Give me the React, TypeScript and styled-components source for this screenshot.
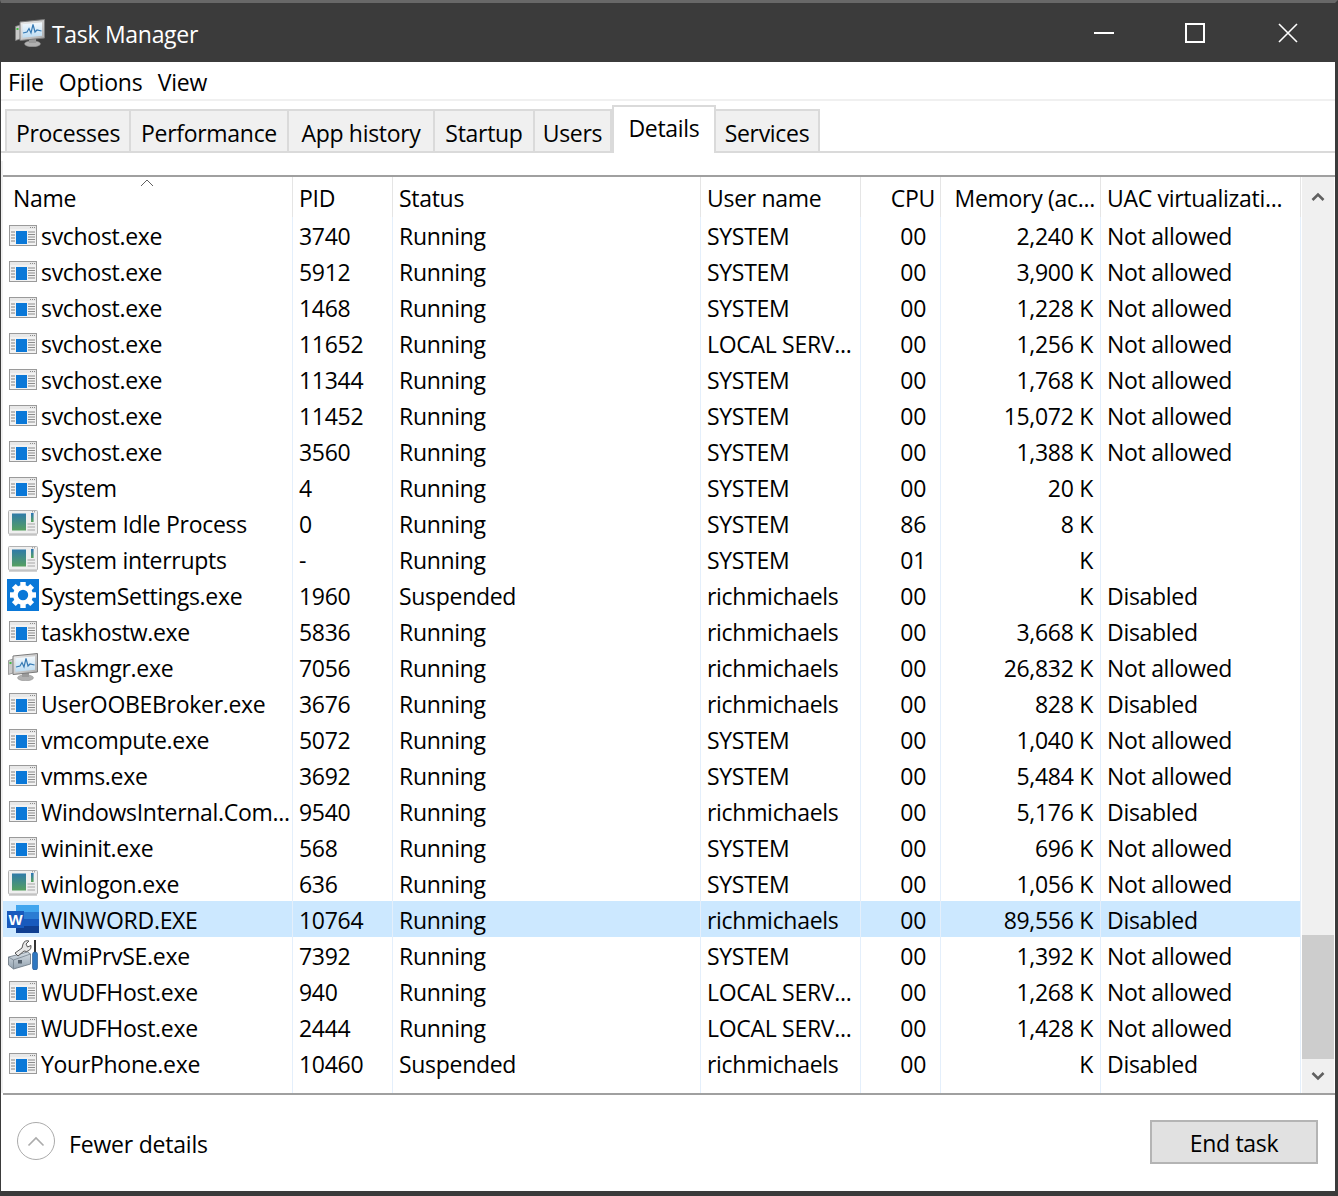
import React from 'react';
import styled, { createGlobalStyle } from 'styled-components';

const Global = createGlobalStyle`
  html, body { margin: 0; padding: 0; background: #3b3b3b; }
  * { box-sizing: border-box; }
`;

const Win = styled.div`
  width: 1338px;
  height: 1196px;
  display: flex;
  flex-direction: column;
  position: relative;
  overflow: hidden;
  background: #fff;
  border-top: 3px solid #686868;
  border-left: 1px solid #3b3b3b;
  border-right: 3px solid #3b3b3b;
  border-bottom: 5px solid #3b3b3b;
  font-family: "Open Sans", "Noto Sans", sans-serif;
  font-size: 23px;
  letter-spacing: -0.3px;
  color: #000;
`;

const Peek = styled.div`
  position: absolute;
  top: -3px;
  left: 1161px;
  width: 34px;
  height: 3px;
  background: linear-gradient(90deg, #111 0 18%, #d8d8c0 35% 70%, #111 85%);
  border-radius: 0 0 16px 16px;
`;

const TitleBar = styled.div`
  height: 59px;
  flex: none;
  background: #3b3b3b;
  color: #fff;
  display: flex;
  align-items: center;
  padding: 0 0 0 14px;
`;

const TitleText = styled.span`
  margin-left: 7px;
  padding-top: 3px;
  flex: 1;
  font-size: 23px;
`;

const WinBtn = styled.button<{ $w: number }>`
  width: ${p => p.$w}px;
  height: 59px;
  border: 0;
  padding: 0;
  background: none;
  display: flex;
  align-items: center;
  justify-content: center;
`;

const TitleEnd = styled.div`
  width: 1px;
  flex: none;
`;

const MenuBar = styled.div`
  height: 39px;
  flex: none;
  display: flex;
  align-items: center;
  gap: 15px;
  padding: 3px 0 0 7px;
  border-bottom: 2px solid #f0f0f0;
  letter-spacing: -0.15px;
`;

const TabStrip = styled.div`
  height: 52px;
  flex: none;
  display: flex;
  align-items: flex-end;
  padding-left: 4px;
  border-bottom: 2px solid #dadada;
`;

const Tab = styled.div<{ $w: number; $first?: boolean; $active?: boolean }>`
  width: ${p => p.$w}px;
  height: ${p => (p.$active ? 48 : 42)}px;
  margin-bottom: ${p => (p.$active ? -2 : 0)}px;
  background: ${p => (p.$active ? '#fff' : '#f0f0f0')};
  border: solid #dadada;
  border-width: 2px 2px 0 ${p => (p.$first || p.$active ? 2 : 0)}px;
  display: flex;
  align-items: ${p => (p.$active ? 'flex-start' : 'center')};
  justify-content: center;
  padding-top: ${p => (p.$active ? 5 : 3)}px;
`;

const Gap = styled.div`
  height: 22px;
  flex: none;
`;

const TableArea = styled.div`
  flex: 1;
  display: flex;
  min-height: 0;
  border-top: 2px solid #a0a0a0;
  border-bottom: 2px solid #a0a0a0;
  margin-left: 2px;
  position: relative;
`;

const Edge = styled.div`
  width: 2px;
  position: absolute;
  left: -2px;
  top: -16px;
  bottom: 0;
  background: #f0f0f0;
`;

const Table = styled.div`
  flex: none;
  width: 1298px;
  display: flex;
  flex-direction: column;
`;

const HeadRow = styled.div`
  height: 40px;
  flex: none;
  display: grid;
  grid-template-columns: 290px 100px 308px 160px 80px 160px 200px;
`;

const HeadCell = styled.div<{ $right?: boolean }>`
  display: flex;
  align-items: center;
  justify-content: ${p => (p.$right ? 'flex-end' : 'flex-start')};
  padding: 1px ${p => (p.$right ? 5 : 0)}px 0 6px;
  border-right: 1px solid #e5e5e5;
  white-space: nowrap;
  position: relative;
  &:first-child { padding-left: 10px; }
`;

const Sort = styled.svg`
  position: absolute;
  left: 137px;
  top: 2px;
`;

const Rows = styled.div`
  flex: 1;
  display: flex;
  flex-direction: column;
`;

const Row = styled.div<{ $sel?: boolean }>`
  height: 36px;
  flex: none;
  display: grid;
  grid-template-columns: 290px 100px 308px 160px 80px 160px 200px;
  background: ${p => (p.$sel ? '#cce8ff' : 'transparent')};
`;

const Filler = styled(Row)`
  height: auto;
  flex: 1;
`;

const Cell = styled.div<{ $align?: 'right' | 'cpu' }>`
  display: flex;
  align-items: center;
  justify-content: ${p => (p.$align ? 'flex-end' : 'flex-start')};
  padding: 2px ${p => (p.$align === 'cpu' ? 14 : p.$align === 'right' ? 7 : 0)}px 0 6px;
  border-right: 1px solid #e4effb;
  white-space: nowrap;
`;

const NameCell = styled(Cell)`
  padding-left: 4px;
`;

const IconSlot = styled.span`
  width: 32px;
  height: 34px;
  flex: none;
  margin-right: 2px;
  margin-top: -2px;
  display: flex;
  align-items: center;
  justify-content: center;
`;

const Scrollbar = styled.div`
  flex: 1;
  background: #f0f0f0;
  display: flex;
  flex-direction: column;
  margin: 0 1px 0 1px;
`;

const ArrowBox = styled.div<{ $h: number }>`
  height: ${p => p.$h}px;
  flex: none;
  display: flex;
  align-items: center;
  justify-content: center;
`;

const Track = styled.div`
  flex: 1;
  display: flex;
  flex-direction: column;
  justify-content: flex-end;
`;

const Thumb = styled.div`
  height: 124px;
  background: #cdcdcd;
`;

const Footer = styled.div`
  height: 96px;
  flex: none;
  display: flex;
  align-items: center;
  padding: 0 17px 0 16px;
`;

const Circle = styled.div`
  width: 38px;
  height: 38px;
  border-radius: 50%;
  border: 1px solid #ababab;
  display: flex;
  align-items: center;
  justify-content: center;
  margin: -4px 14px 0 0;
`;

const FooterLabel = styled.span`
  flex: 1;
  padding-top: 2px;
  letter-spacing: -0.2px;
`;

const EndBtn = styled.div`
  width: 168px;
  height: 44px;
  background: #e1e1e1;
  border: 2px solid #b4b4b4;
  display: flex;
  align-items: center;
  justify-content: center;
  padding-top: 1px;
  margin-top: -2px;
`;

const WinIcon = () => (
  <svg width="28" height="21" viewBox="0 0 28 21">
    <rect x="0.5" y="0.5" width="27" height="20" fill="#f2f2f2" stroke="#9a9a9a" />
    <rect x="1" y="1" width="26" height="3" fill="#e8e8e8" />
    <path d="M23 2.5h1M25 2.5h1M21 2.5h1" stroke="#8a8a8a" />
    <rect x="7" y="6" width="11" height="13" fill="#0a78d8" />
    <path d="M2 7h4M2 10h4M2 13h4M2 16h4" stroke="#a8a8a8" strokeWidth="1.4" />
    <path d="M19 7h7M19 9.5h7M19 12h7M19 14.500h7M19 17h7" stroke="#8c8c8c" strokeWidth="1.2" />
  </svg>
);

const SysIcon = () => (
  <svg width="30" height="26" viewBox="0 0 30 26">
    <defs>
      <linearGradient id="sysg" x1="0" y1="0" x2="0" y2="1">
        <stop offset="0" stopColor="#2f7aa8" />
        <stop offset="1" stopColor="#56a060" />
      </linearGradient>
      <linearGradient id="sysb" x1="0" y1="0" x2="0" y2="1">
        <stop offset="0" stopColor="#2d74b8" />
        <stop offset="1" stopColor="#5aa65a" />
      </linearGradient>
    </defs>
    <rect x="1" y="23.500" width="28" height="2.500" fill="#d4d4d4" />
    <rect x="0.5" y="0.500" width="29" height="23.500" rx="1" fill="#efefef" stroke="#b2b2b2" />
    <rect x="4" y="3.500" width="14" height="17" fill="url(#sysg)" />
    <rect x="23" y="3" width="2.600" height="9" fill="url(#sysb)" />
    <path d="M19.500 14h7.500M19.500 17h7.500M19.500 20h7.500" stroke="#a5a5a5" />
    <path d="M24 1.800h1M26 1.800h1" stroke="#8a8a8a" />
  </svg>
);

const GearIcon = () => (
  <svg width="32" height="32" viewBox="0 0 32 32">
    <rect width="32" height="32" fill="#0a78d8" />
    <g fill="#fff" transform="translate(16 16)">
      {[0, 45, 90, 135, 180, 225, 270, 315].map(a => (
        <rect key={a} x="-2.700" y="-13" width="5.400" height="7" transform={`rotate(${a})`} />
      ))}
      <path fillRule="evenodd" d="M0-10a10 10 0 1 1 0 20a10 10 0 1 1 0-20zM0-5.200a5.200 5.200 0 1 0 0 10.400a5.200 5.200 0 1 0 0-10.400z" />
    </g>
  </svg>
);

const TaskIcon = () => (
  <svg width="30" height="28" viewBox="0 0 30 28">
    <defs>
      <linearGradient id="taskscr" x1="0" y1="0" x2="0" y2="1">
        <stop offset="0" stopColor="#f4f9fd" />
        <stop offset="1" stopColor="#bcdcf2" />
      </linearGradient>
      <linearGradient id="taskfr" x1="0" y1="0" x2="1" y2="1">
        <stop offset="0" stopColor="#f0f0f0" />
        <stop offset="1" stopColor="#a9a9a9" />
      </linearGradient>
    </defs>
    <ellipse cx="17.500" cy="24.800" rx="8" ry="3" fill="#b0b0b0" stroke="#8a8a8a" strokeWidth="0.5" />
    <path d="M14 19h7v5h-7z" fill="#9b9b9b" />
    <path d="M0.500 7.500l6-2v14l-6 2z" fill="#c9c9c9" stroke="#808080" strokeWidth="0.7" />
    <rect x="1.500" y="9" width="2" height="2" fill="#45bb45" />
    <path d="M5 3L29.500 0.500V19L5 21.500z" fill="url(#taskfr)" stroke="#7a7a7a" />
    <path d="M7.500 5.200L27 3.200V16.800L7.500 18.800z" fill="url(#taskscr)" />
    <path d="M8 14l4-1 2-3.500 2 4.500 2-8.500 2 7.500 2-2 4.500 1" fill="none" stroke="#3579b3" strokeWidth="1.200" />
  </svg>
);

const WordIcon = () => (
  <svg width="32" height="28" viewBox="0 0 32 28">
    <path d="M9 0H32V7H9z" fill="#41a5ee" />
    <path d="M9 7H32V14H9z" fill="#2b7cd3" />
    <path d="M9 14H32V21H9z" fill="#185abd" />
    <path d="M9 21H32V28H9z" fill="#103f91" />
    <rect x="0" y="6" width="17" height="17" fill="#185abd" />
    <text x="8.500" y="20" fontFamily="Liberation Sans, sans-serif" fontWeight="700" fontSize="15" letterSpacing="0" textAnchor="middle" fill="#fff">W</text>
  </svg>
);

const WmiIcon = () => (
  <svg width="30" height="30" viewBox="0 0 30 30">
    <defs>
      <linearGradient id="wmibox" x1="0" y1="0" x2="0" y2="1">
        <stop offset="0" stopColor="#d5dde4" />
        <stop offset="1" stopColor="#94a3b0" />
      </linearGradient>
    </defs>
    <path d="M0.500 17l19-5 3 2v10l-17 5-5-4z" fill="url(#wmibox)" stroke="#66727e" strokeWidth="0.8" />
    <path d="M0.500 17l5 3 17-6M5.500 20v9" fill="none" stroke="#75818d" strokeWidth="0.8" />
    <rect x="10" y="20" width="4" height="3.500" fill="#55616d" />
    <path d="M7 13l7-5 1-4a5 5 0 0 1 6-3l-3 3 1.500 3 3.500-1.500a5 5 0 0 1-7 5.500l-6 5z" fill="#e8e8e8" stroke="#444" strokeWidth="0.9" />
    <rect x="26" y="0" width="2" height="13" fill="#333" />
    <rect x="24.500" y="12" width="5" height="18" rx="2.200" fill="#2f77c0" stroke="#1d4f88" strokeWidth="0.6" />
  </svg>
);

const ICONS = { w: WinIcon, s: SysIcon, g: GearIcon, t: TaskIcon, o: WordIcon, m: WmiIcon };
type IconKey = keyof typeof ICONS;

const NA = 'Not allowed';
const DIS = 'Disabled';
const RUN = 'Running';
const SUS = 'Suspended';
const SY = 'SYSTEM';
const RM = 'richmichaels';
const LS = 'LOCAL SERV...';

const DATA: [IconKey, string, string, string, string, string, string, string][] = [
  ['w', 'svchost.exe', '3740', RUN, SY, '00', '2,240 K', NA],
  ['w', 'svchost.exe', '5912', RUN, SY, '00', '3,900 K', NA],
  ['w', 'svchost.exe', '1468', RUN, SY, '00', '1,228 K', NA],
  ['w', 'svchost.exe', '11652', RUN, LS, '00', '1,256 K', NA],
  ['w', 'svchost.exe', '11344', RUN, SY, '00', '1,768 K', NA],
  ['w', 'svchost.exe', '11452', RUN, SY, '00', '15,072 K', NA],
  ['w', 'svchost.exe', '3560', RUN, SY, '00', '1,388 K', NA],
  ['w', 'System', '4', RUN, SY, '00', '20 K', ''],
  ['s', 'System Idle Process', '0', RUN, SY, '86', '8 K', ''],
  ['s', 'System interrupts', '-', RUN, SY, '01', 'K', ''],
  ['g', 'SystemSettings.exe', '1960', SUS, RM, '00', 'K', DIS],
  ['w', 'taskhostw.exe', '5836', RUN, RM, '00', '3,668 K', DIS],
  ['t', 'Taskmgr.exe', '7056', RUN, RM, '00', '26,832 K', NA],
  ['w', 'UserOOBEBroker.exe', '3676', RUN, RM, '00', '828 K', DIS],
  ['w', 'vmcompute.exe', '5072', RUN, SY, '00', '1,040 K', NA],
  ['w', 'vmms.exe', '3692', RUN, SY, '00', '5,484 K', NA],
  ['w', 'WindowsInternal.Com...', '9540', RUN, RM, '00', '5,176 K', DIS],
  ['w', 'wininit.exe', '568', RUN, SY, '00', '696 K', NA],
  ['s', 'winlogon.exe', '636', RUN, SY, '00', '1,056 K', NA],
  ['o', 'WINWORD.EXE', '10764', RUN, RM, '00', '89,556 K', DIS],
  ['m', 'WmiPrvSE.exe', '7392', RUN, SY, '00', '1,392 K', NA],
  ['w', 'WUDFHost.exe', '940', RUN, LS, '00', '1,268 K', NA],
  ['w', 'WUDFHost.exe', '2444', RUN, LS, '00', '1,428 K', NA],
  ['w', 'YourPhone.exe', '10460', SUS, RM, '00', 'K', DIS],
];

const TABS: [string, number][] = [
  ['Processes', 126], ['Performance', 158], ['App history', 146], ['Startup', 100],
  ['Users', 77], ['Details', 104], ['Services', 104],
];

export default function App() {
  return (
    <Win>
      <Global />
      <Peek />
      <TitleBar>
        <TaskIcon />
        <TitleText>Task Manager</TitleText>
        <WinBtn $w={88}>
          <svg width="22" height="22" viewBox="0 0 22 22"><path d="M1 11h20" stroke="#fff" strokeWidth="2" /></svg>
        </WinBtn>
        <WinBtn $w={94}>
          <svg width="22" height="22" viewBox="0 0 22 22"><rect x="2" y="2" width="18" height="18" fill="none" stroke="#fff" strokeWidth="2" /></svg>
        </WinBtn>
        <WinBtn $w={92}>
          <svg width="22" height="22" viewBox="0 0 22 22"><path d="M2 2l18 18M20 2L2 20" stroke="#fff" strokeWidth="1.600" /></svg>
        </WinBtn>
        <TitleEnd />
      </TitleBar>
      <MenuBar>
        <span>File</span>
        <span>Options</span>
        <span>View</span>
      </MenuBar>
      <TabStrip>
        {TABS.map(([t, w], i) => (
          <Tab key={t} $w={w} $first={i === 0} $active={t === 'Details'}>{t}</Tab>
        ))}
      </TabStrip>
      <Gap />
      <TableArea>
        <Edge />
        <Table>
          <HeadRow>
            <HeadCell>
              Name
              <Sort width="14" height="8" viewBox="0 0 14 8"><path d="M1 7l6-6 6 6" fill="none" stroke="#606060" strokeWidth="1" /></Sort>
            </HeadCell>
            <HeadCell>PID</HeadCell>
            <HeadCell>Status</HeadCell>
            <HeadCell>User name</HeadCell>
            <HeadCell $right>CPU</HeadCell>
            <HeadCell $right>Memory (ac...</HeadCell>
            <HeadCell>UAC virtualizati...</HeadCell>
          </HeadRow>
          <Rows>
            {DATA.map((d, i) => {
              const I = ICONS[d[0]];
              return (
                <Row key={i} $sel={d[1] === 'WINWORD.EXE'}>
                  <NameCell><IconSlot><I /></IconSlot>{d[1]}</NameCell>
                  <Cell>{d[2]}</Cell>
                  <Cell>{d[3]}</Cell>
                  <Cell>{d[4]}</Cell>
                  <Cell $align="cpu">{d[5]}</Cell>
                  <Cell $align="right">{d[6]}</Cell>
                  <Cell>{d[7]}</Cell>
                </Row>
              );
            })}
            <Filler>
              <Cell /><Cell /><Cell /><Cell /><Cell /><Cell /><Cell />
            </Filler>
          </Rows>
        </Table>
        <Scrollbar>
          <ArrowBox $h={40}>
            <svg width="14" height="10" viewBox="0 0 14 10"><path d="M1.500 8L7 2.500 12.500 8" fill="none" stroke="#606060" strokeWidth="2.600" /></svg>
          </ArrowBox>
          <Track><Thumb /></Track>
          <ArrowBox $h={34}>
            <svg width="14" height="10" viewBox="0 0 14 10"><path d="M1.500 2L7 7.500 12.500 2" fill="none" stroke="#606060" strokeWidth="2.600" /></svg>
          </ArrowBox>
        </Scrollbar>
      </TableArea>
      <Footer>
        <Circle>
          <svg width="18" height="11" viewBox="0 0 18 11"><path d="M1.500 9.500L9 2l7.500 7.500" fill="none" stroke="#ababab" strokeWidth="1.600" /></svg>
        </Circle>
        <FooterLabel>Fewer details</FooterLabel>
        <EndBtn>End task</EndBtn>
      </Footer>
    </Win>
  );
}
